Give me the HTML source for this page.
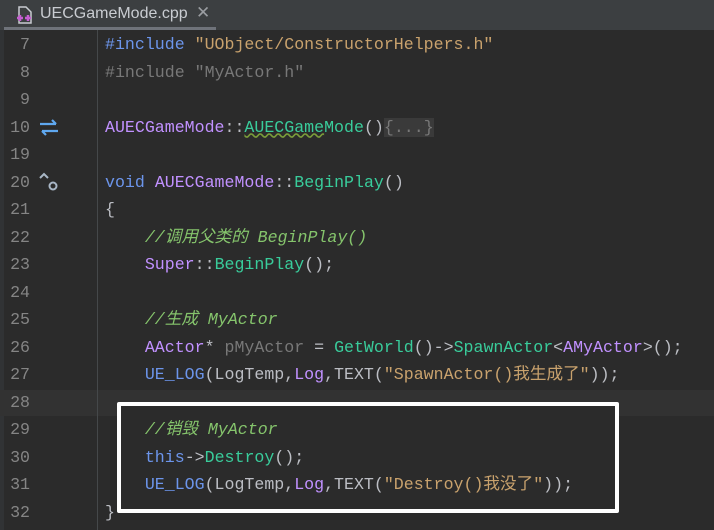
<!DOCTYPE html>
<html><head><meta charset="utf-8"><style>
body{margin:0;width:714px;height:530px;overflow:hidden;background:#2b2b2b;position:relative;font-family:"Liberation Mono","Noto Sans CJK SC",monospace;}
.tabbar{position:absolute;left:0;top:0;width:714px;height:30px;background:#3c3f41;}
.tab{position:absolute;left:4px;top:0;width:212px;height:27px;background:#3c3f41;border-bottom:3px solid #6f737a;font-family:"Liberation Sans","Noto Sans CJK SC",sans-serif;font-size:16px;color:#c9ccd1;}
.tab span{position:absolute;left:36px;top:5px;}
.tab .x{left:192px;top:3px;color:#9a9da1;font-size:17px}
.strip{position:absolute;left:0;top:30px;width:4px;height:500px;background:#313335}
.sep{position:absolute;left:97px;top:30px;width:1px;height:500px;background:#45484a}
.ln{position:absolute;left:0;width:30px;text-align:right;font-size:16.6px;color:#858585;}
.l{position:absolute;left:105px;font-size:16.6px;white-space:pre;color:#bcbec4;line-height:20px}
.cur{position:absolute;left:0;top:390px;width:714px;height:26px;background:#323232}
.box{position:absolute;left:117px;top:402px;width:494px;height:103px;border:4px solid #fff;border-radius:2px;background:#2b2b2b}
.kw{color:#6c95eb}.str{color:#c9a26d}.cm{color:#85c46c;font-style:italic}.ty{color:#c191ff}.fn{color:#39cc9b}.gr{color:#787878}.mac{color:#6c95eb}
</style></head><body>
<div class="tabbar"><div class="tab">
<svg style="position:absolute;left:12px;top:6px" width="18" height="18"><path d="M3 1h7l5 5v11H3z" fill="none" stroke="#c9ccd1" stroke-width="1.5"/><path d="M1 12h6M4 9v6M9 12h6M12 9v6" stroke="#c65ed2" stroke-width="2.5"/></svg>
<span>UECGameMode.cpp</span><span class="x">✕</span></div></div>
<div class="strip"></div>
<div class="cur"></div>
<div class="sep"></div>
<div class="box"></div>
<svg style="position:absolute;left:38px;top:119px" width="22" height="18"><path d="M2 5h16M14 1l4 4M20 12H4M8 16l-4-4" stroke="#5fa8f0" stroke-width="2.2" fill="none"/></svg>
<svg style="position:absolute;left:38px;top:172px" width="22" height="20"><path d="M2 6l4-4 4 4" stroke="#a9b7c6" stroke-width="2" fill="none"/><circle cx="15" cy="14" r="3.5" stroke="#a9b7c6" stroke-width="2" fill="none"/></svg>
<div id="c"></div>
<script>
var L=[[7,'<span class="kw">#include</span> <span class="str">"UObject/ConstructorHelpers.h"</span>'],
[8,'<span class="gr">#include "MyActor.h"</span>'],[9,''],
[10,'<span class="ty">AUECGameMode</span>::<span class="fn" style="text-decoration:underline wavy #7a9c3a">AUECGame</span><span class="fn">Mode</span>()<span class="gr" style="background:#3a3a3a">{...}</span>'],
[19,''],[20,'<span class="kw">void</span> <span class="ty">AUECGameMode</span>::<span class="fn">BeginPlay</span>()'],
[21,'{'],[22,'    <span class="cm">//调用父类的 BeginPlay()</span>'],[23,'    <span class="kw" style="color:#c191ff">Super</span>::<span class="fn">BeginPlay</span>();'],
[24,''],[25,'    <span class="cm">//生成 MyActor</span>'],
[26,'    <span class="ty">AActor</span>* <span class="gr">pMyActor</span> = <span class="fn">GetWorld</span>()-&gt;<span class="fn">SpawnActor</span>&lt;<span class="ty">AMyActor</span>&gt;();'],
[27,'    <span class="mac">UE_LOG</span>(LogTemp,<span class="ty">Log</span>,TEXT(<span class="str">"SpawnActor()我生成了"</span>));'],
[28,''],[29,'    <span class="cm">//销毁 MyActor</span>'],[30,'    <span class="kw">this</span>-&gt;<span class="fn">Destroy</span>();'],
[31,'    <span class="mac">UE_LOG</span>(LogTemp,<span class="ty">Log</span>,TEXT(<span class="str">"Destroy()我没了"</span>));'],[32,'}']];
var h='';L.forEach(function(r,i){var y=35+i*27.5;h+='<div class="ln" style="top:'+y+'px">'+r[0]+'</div><div class="l" style="top:'+y+'px">'+r[1]+'</div>';});
document.getElementById('c').innerHTML=h;
</script>
</body></html>
